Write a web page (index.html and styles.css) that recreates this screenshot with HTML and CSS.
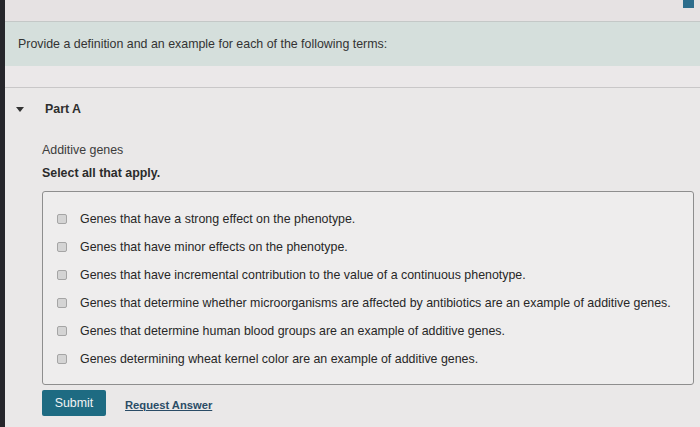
FILE: index.html
```html
<!DOCTYPE html>
<html lang="en">
<head>
    <meta charset="UTF-8">
    <title>Part A - Additive genes</title>
    <link rel="stylesheet" href="styles.css">
</head>
<body>
    <div class="top-strip">
        <span class="corner-mark"></span>
    </div>

    <div class="intro">
        Provide a definition and an example for each of the following terms:
    </div>
    <div class="intro-gap"></div>

    <div class="part">
        <div class="part-header">
            <span class="caret"></span>
            <span class="part-title">Part A</span>
        </div>

        <div class="part-body">
            <p class="term">Additive genes</p>
            <p class="instruction">Select all that apply.</p>

            <div class="choices">
                <label class="choice"><span class="box"></span>Genes that have a strong effect on the phenotype.</label>
                <label class="choice"><span class="box"></span>Genes that have minor effects on the phenotype.</label>
                <label class="choice"><span class="box"></span>Genes that have incremental contribution to the value of a continuous phenotype.</label>
                <label class="choice"><span class="box"></span>Genes that determine whether microorganisms are affected by antibiotics are an example of additive genes.</label>
                <label class="choice"><span class="box"></span>Genes that determine human blood groups are an example of additive genes.</label>
                <label class="choice"><span class="box"></span>Genes determining wheat kernel color are an example of additive genes.</label>
            </div>

            <div class="actions">
                <button class="submit-btn">Submit</button>
                <a class="request-link" href="#">Request Answer</a>
            </div>
        </div>
    </div>
</body>
</html>
```

FILE: styles.css
```css
body {
    margin: 0;
    height: 427px;
    overflow: hidden;
    font-family: "Liberation Sans", Arial, sans-serif;
    color: #2b2b2b;
    background-color: #eae8e8;
    border-left: 5px solid #26262b;
    box-sizing: border-box;
}
.top-strip {
    position: relative;
    height: 21px;
    background-color: #e6e2e3;
}
.corner-mark {
    position: absolute;
    top: 0;
    right: 6px;
    width: 11px;
    height: 8px;
    background-color: #2d6d8c;
}
.intro {
    height: 44px;
    padding-left: 13px;
    line-height: 44px;
    font-size: 12.4px;
    color: #333;
    background-color: #d5dfdc;
    border-top: 1px solid #c4c8c7;
}
.intro-gap {
    height: 21px;
    background-color: #ebe8e9;
    border-bottom: 1px solid #c9c7c8;
}
.part-header {
    display: flex;
    align-items: center;
    height: 42px;
    padding-left: 11px;
}
.caret {
    width: 0;
    height: 0;
    border-left: 4px solid transparent;
    border-right: 4px solid transparent;
    border-top: 5px solid #333;
    margin-right: 21px;
}
.part-title {
    font-size: 12.4px;
    font-weight: bold;
    color: #2e2e2e;
}
.part-body {
    padding-left: 37px;
    padding-right: 6px;
}
.term {
    margin: 13px 0 0;
    font-size: 12.4px;
    color: #3c3c3c;
}
.instruction {
    margin: 9px 0 0;
    font-size: 12.4px;
    font-weight: bold;
    color: #2b2b2b;
}
.choices {
    margin-top: 11px;
    padding: 13px 14px 11px;
    background-color: #eeeded;
    border: 1px solid #8e8e8e;
    border-radius: 3px;
}
.choice {
    display: flex;
    align-items: center;
    height: 28px;
    font-size: 12.4px;
    color: #272727;
}
.box {
    width: 8px;
    height: 8px;
    margin-right: 13px;
    border: 1px solid #a5a5a5;
    border-radius: 2px;
    background-color: #d4d4d4;
}
.actions {
    display: flex;
    align-items: center;
    margin-top: 5px;
}
.submit-btn {
    width: 64px;
    height: 26px;
    padding: 0;
    border: none;
    border-radius: 2px;
    background-color: #1e6b82;
    color: #f2f2f2;
    font-family: "Liberation Sans", Arial, sans-serif;
    font-size: 12.4px;
}
.request-link {
    margin-left: 19px;
    margin-top: 4px;
    font-size: 11.2px;
    font-weight: bold;
    color: #2a4c66;
}
```
